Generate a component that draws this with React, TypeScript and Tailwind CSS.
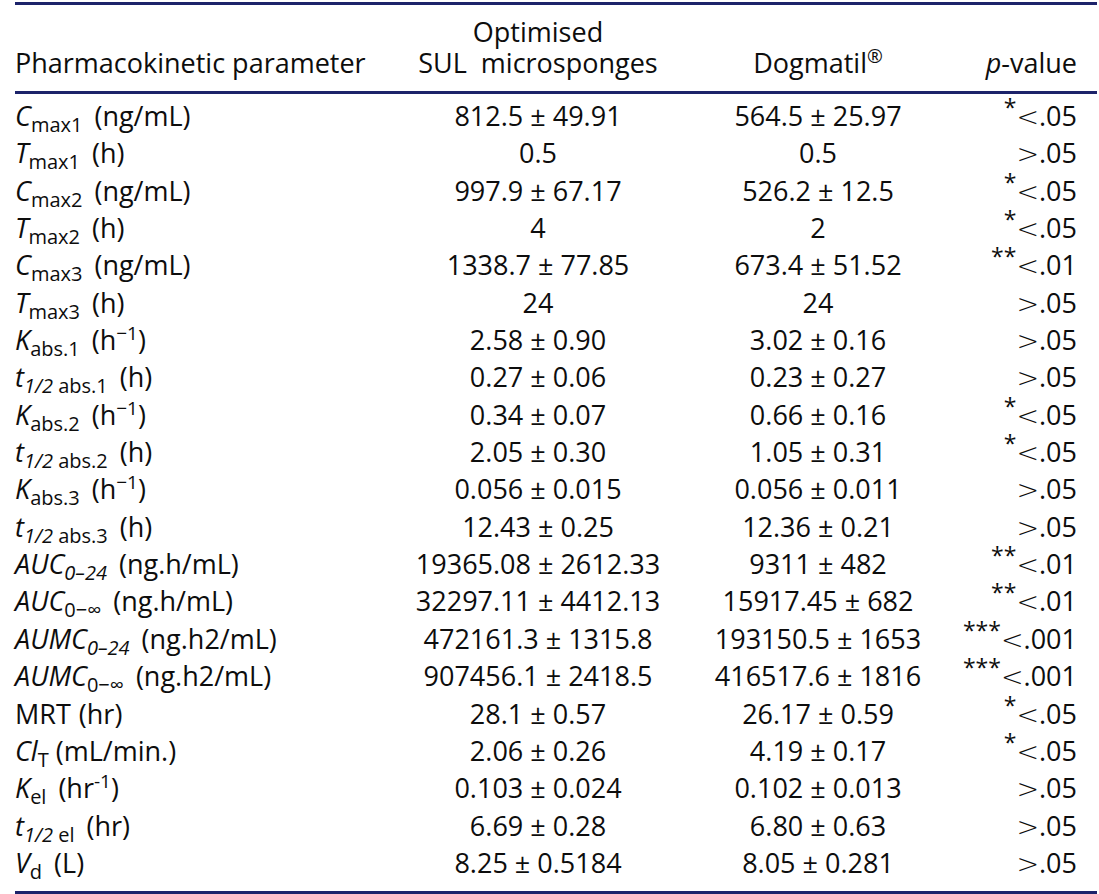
import type { ReactNode } from "react";

type Row = {
  sym: ReactNode;
  unit: ReactNode;
  gap?: string;
  sul: string;
  dog: string;
  stars: string;
  p: string;
};

const Sub = ({ children, italic = false }: { children: ReactNode; italic?: boolean }) => (
  <span className={`align-sub text-[20px] leading-[0] ${italic ? "italic" : "not-italic"}`}>{children}</span>
);

const Sup = ({ children, size = "text-[19px]" }: { children: ReactNode; size?: string }) => (
  <span className={`align-super leading-[0] ${size}`}>{children}</span>
);

const Half = ({ tail }: { tail: string }) => (
  <>
    <i>t</i>
    <Sub italic>1/2</Sub>
    <Sub>&nbsp;{tail}</Sub>
  </>
);

const hInv = <>(h<Sup>−1</Sup>)</>;

const rows: Row[] = [
  { sym: <><i>C</i><Sub>max1</Sub></>, unit: "(ng/mL)", sul: "812.5 ± 49.91", dog: "564.5 ± 25.97", stars: "*", p: "<.05" },
  { sym: <><i>T</i><Sub>max1</Sub></>, unit: "(h)", sul: "0.5", dog: "0.5", stars: "", p: ">.05" },
  { sym: <><i>C</i><Sub>max2</Sub></>, unit: "(ng/mL)", sul: "997.9 ± 67.17", dog: "526.2 ± 12.5", stars: "*", p: "<.05" },
  { sym: <><i>T</i><Sub>max2</Sub></>, unit: "(h)", sul: "4", dog: "2", stars: "*", p: "<.05" },
  { sym: <><i>C</i><Sub>max3</Sub></>, unit: "(ng/mL)", sul: "1338.7 ± 77.85", dog: "673.4 ± 51.52", stars: "**", p: "<.01" },
  { sym: <><i>T</i><Sub>max3</Sub></>, unit: "(h)", sul: "24", dog: "24", stars: "", p: ">.05" },
  { sym: <><i>K</i><Sub>abs.1</Sub></>, unit: hInv, sul: "2.58 ± 0.90", dog: "3.02 ± 0.16", stars: "", p: ">.05" },
  { sym: <Half tail="abs.1" />, unit: "(h)", sul: "0.27 ± 0.06", dog: "0.23 ± 0.27", stars: "", p: ">.05" },
  { sym: <><i>K</i><Sub>abs.2</Sub></>, unit: hInv, sul: "0.34 ± 0.07", dog: "0.66 ± 0.16", stars: "*", p: "<.05" },
  { sym: <Half tail="abs.2" />, unit: "(h)", sul: "2.05 ± 0.30", dog: "1.05 ± 0.31", stars: "*", p: "<.05" },
  { sym: <><i>K</i><Sub>abs.3</Sub></>, unit: hInv, sul: "0.056 ± 0.015", dog: "0.056 ± 0.011", stars: "", p: ">.05" },
  { sym: <Half tail="abs.3" />, unit: "(h)", sul: "12.43 ± 0.25", dog: "12.36 ± 0.21", stars: "", p: ">.05" },
  { sym: <><i>AUC</i><Sub italic>0–24</Sub></>, unit: "(ng.h/mL)", sul: "19365.08 ± 2612.33", dog: "9311 ± 482", stars: "**", p: "<.01" },
  { sym: <><i>AUC</i><Sub>0−∞</Sub></>, unit: "(ng.h/mL)", sul: "32297.11 ± 4412.13", dog: "15917.45 ± 682", stars: "**", p: "<.01" },
  { sym: <><i>AUMC</i><Sub italic>0–24</Sub></>, unit: "(ng.h2/mL)", sul: "472161.3 ± 1315.8", dog: "193150.5 ± 1653", stars: "***", p: "<.001" },
  { sym: <><i>AUMC</i><Sub>0−∞</Sub></>, unit: "(ng.h2/mL)", sul: "907456.1 ± 2418.5", dog: "416517.6 ± 1816", stars: "***", p: "<.001" },
  { sym: "MRT", unit: "(hr)", gap: "ml-[8px]", sul: "28.1 ± 0.57", dog: "26.17 ± 0.59", stars: "*", p: "<.05" },
  { sym: <><i>Cl</i><Sub>T</Sub></>, unit: "(mL/min.)", gap: "ml-[7px]", sul: "2.06 ± 0.26", dog: "4.19 ± 0.17", stars: "*", p: "<.05" },
  { sym: <><i>K</i><Sub>el</Sub></>, unit: <>(hr<Sup>-1</Sup>)</>, sul: "0.103 ± 0.024", dog: "0.102 ± 0.013", stars: "", p: ">.05" },
  { sym: <Half tail="el" />, unit: "(hr)", sul: "6.69 ± 0.28", dog: "6.80 ± 0.63", stars: "", p: ">.05" },
  { sym: <><i>V</i><Sub>d</Sub></>, unit: "(L)", sul: "8.25 ± 0.5184", dog: "8.05 ± 0.281", stars: "", p: ">.05" },
];

const cols = "grid grid-cols-[385px_276px_284px_117px]";

export default function App() {
  return (
    <div className="min-h-screen bg-white pt-[2px] font-['Open_Sans',sans-serif] text-[27px] text-[#0d0d0d]">
      <div className="ml-[15px] w-[1082px]">
        <div className="h-[3px] bg-[#1c236a]" />
        <div className={`${cols} items-end pt-[11px] pb-[13px] pr-[20px] leading-[31px] whitespace-nowrap`}>
          <div>Pharmacokinetic parameter</div>
          <div className="flex flex-col items-center">
            <span>Optimised</span>
            <span>
              SUL<span className="ml-[14px]">microsponges</span>
            </span>
          </div>
          <div className="flex justify-center">
            <span>
              Dogmatil<Sup>®</Sup>
            </span>
          </div>
          <div className="text-right">
            <i>p</i>-value
          </div>
        </div>
        <div className="h-[3px] bg-[#1c236a]" />
        <div className="pt-[3px] pb-[10px] pr-[20px]">
          {rows.map((r, i) => (
            <div key={i} className={`${cols} leading-[37.35px] whitespace-nowrap`}>
              <div>
                {r.sym}
                <span className={r.gap ?? "ml-[12px]"}>{r.unit}</span>
              </div>
              <div className="flex justify-center">
                <span>{r.sul}</span>
              </div>
              <div className="flex justify-center">
                <span>{r.dog}</span>
              </div>
              <div className="text-right">
                {r.stars && <Sup size="text-[23px]">{r.stars}</Sup>}
                <span className="font-['DejaVu_Sans',sans-serif] text-[27px] font-extralight leading-[0]">{r.p[0]}</span>
                {r.p.slice(1)}
              </div>
            </div>
          ))}
        </div>
        <div className="h-[3px] bg-[#1c236a]" />
      </div>
    </div>
  );
}
